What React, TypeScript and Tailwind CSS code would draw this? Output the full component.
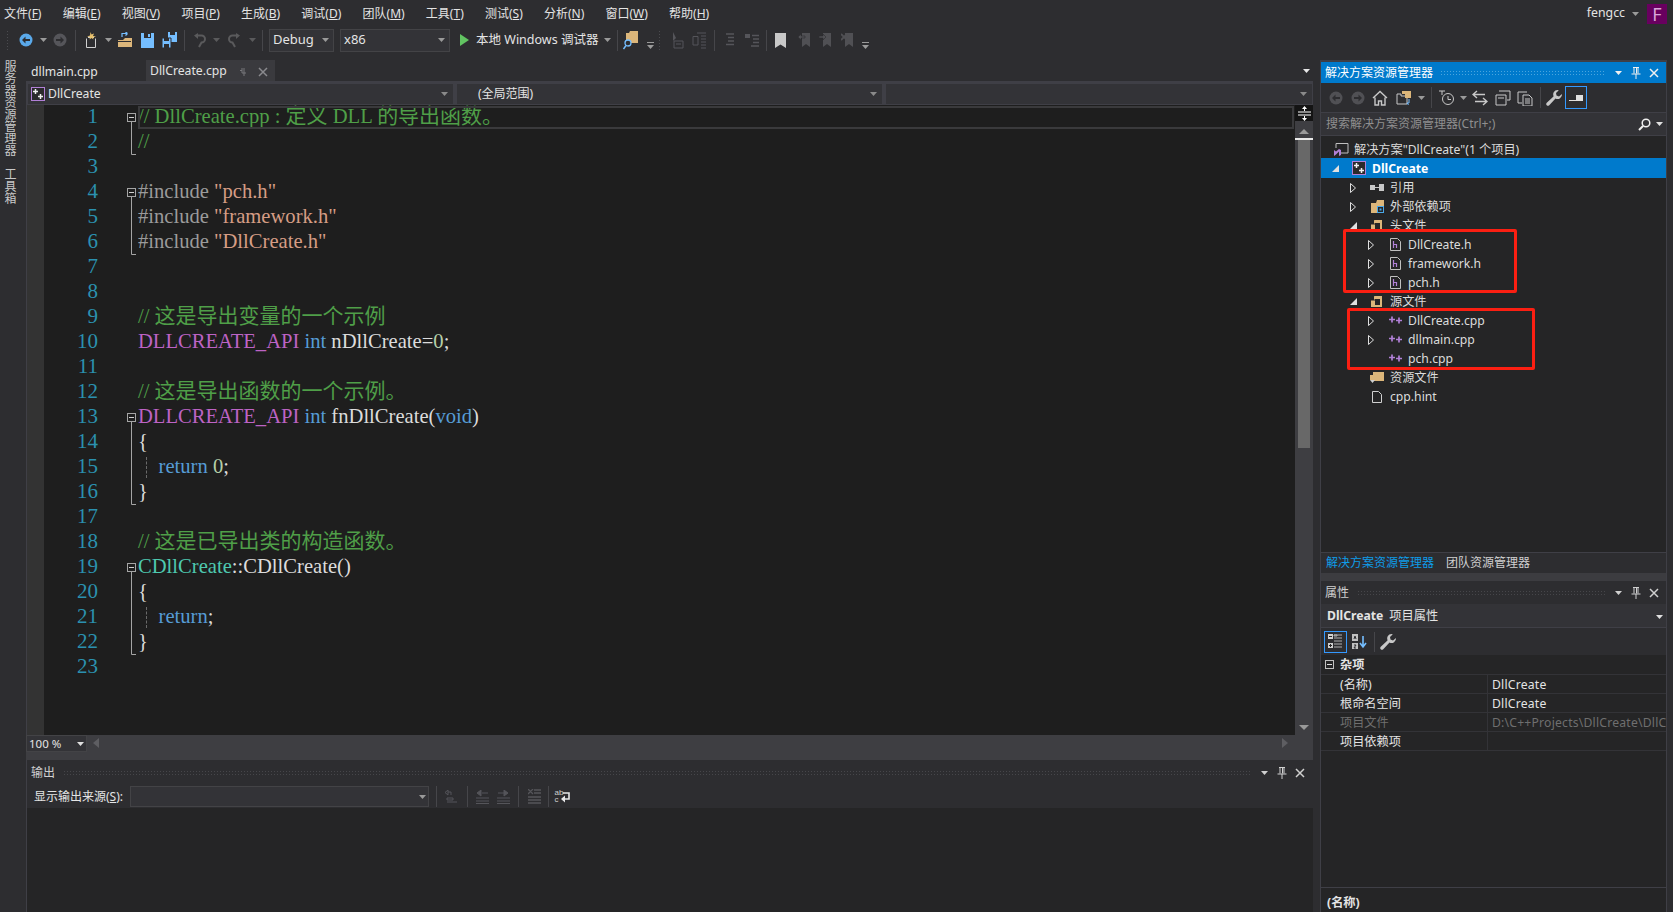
import { ReactNode } from "react";

const uiFont = "font-['Noto_Sans','Noto_Sans_CJK_SC',sans-serif]";
const codeFont = "font-['Liberation_Serif','Noto_Sans_CJK_SC',serif]";

const menus = [
  ["文件", "F"], ["编辑", "E"], ["视图", "V"], ["项目", "P"], ["生成", "B"], ["调试", "D"],
  ["团队", "M"], ["工具", "T"], ["测试", "S"], ["分析", "N"], ["窗口", "W"], ["帮助", "H"],
];

const C = "text-[#4f9f48]";
const CJ = "text-[#4f9f48] text-[21px]";
const K = "text-[#569cd6]";
const P = "text-[#9b9b9b]";
const S = "text-[#d69d85]";
const M = "text-[#bd63c5]";
const T = "text-[#4ec9b0]";
const N = "text-[#dcdcdc]";
const D = "text-[#b5cea8]";

type Fold = "start" | "mid" | "end" | undefined;
type Line = { tokens: [string, string][]; fold?: Fold; guide?: boolean };

const code: Line[] = [
  { tokens: [["// DllCreate.cpp : ", C], ["定义", CJ], [" DLL ", C], ["的导出函数。", CJ]], fold: "start" },
  { tokens: [["//", C]], fold: "end" },
  { tokens: [] },
  { tokens: [["#include ", P], ['"pch.h"', S]], fold: "start" },
  { tokens: [["#include ", P], ['"framework.h"', S]], fold: "mid" },
  { tokens: [["#include ", P], ['"DllCreate.h"', S]], fold: "end" },
  { tokens: [] },
  { tokens: [] },
  { tokens: [["// ", C], ["这是导出变量的一个示例", CJ]] },
  { tokens: [["DLLCREATE_API", M], [" ", N], ["int", K], [" nDllCreate=", N], ["0", D], [";", N]] },
  { tokens: [] },
  { tokens: [["// ", C], ["这是导出函数的一个示例。", CJ]] },
  { tokens: [["DLLCREATE_API", M], [" ", N], ["int", K], [" fnDllCreate(", N], ["void", K], [")", N]], fold: "start" },
  { tokens: [["{", N]], fold: "mid" },
  { tokens: [["    ", N], ["return", K], [" ", N], ["0", D], [";", N]], fold: "mid", guide: true },
  { tokens: [["}", N]], fold: "end" },
  { tokens: [] },
  { tokens: [["// ", C], ["这是已导出类的构造函数。", CJ]] },
  { tokens: [["CDllCreate", T], ["::CDllCreate()", N]], fold: "start" },
  { tokens: [["{", N]], fold: "mid" },
  { tokens: [["    ", N], ["return", K], [";", N]], fold: "mid", guide: true },
  { tokens: [["}", N]], fold: "end" },
  { tokens: [] },
];

function Caret({ color = "#9a9a9a" }: { color?: string }) {
  return (
    <svg width="7" height="4" viewBox="0 0 7 4">
      <path d="M0 0h7L3.5 4z" fill={color} />
    </svg>
  );
}

function OverflowCaret() {
  return (
    <svg width="7" height="8" viewBox="0 0 7 8" className="mt-[11px]">
      <path d="M0 0h7v1H0zM0 3h7L3.5 7z" fill="#9a9a9a" />
    </svg>
  );
}

function Cell({ className, children }: { className: string; children?: ReactNode }) {
  return <div className={`flex flex-none items-center justify-center ${className}`}>{children}</div>;
}

function Sep({ className }: { className: string }) {
  return (
    <Cell className={className}>
      <div className="h-[21px] w-px bg-[#46464a]" />
    </Cell>
  );
}

function Grip() {
  return <div className="h-[20px] w-[4px] bg-[radial-gradient(#4b4b4f_1px,transparent_1px)] bg-[length:3px_3px]" />;
}

function CircleArrow({ dir, color, arrow }: { dir: "l" | "r"; color: string; arrow: string }) {
  return (
    <svg width="14" height="14" viewBox="0 0 14 14">
      <circle cx="7" cy="7" r="6.5" fill={color} />
      <path
        d={dir === "l" ? "M3 7l3.5-3.5V6H11v2H6.5v2.500z" : "M11 7L7.500 3.500V6H3v2h4.500v2.500z"}
        fill={arrow}
      />
    </svg>
  );
}

function NewProjectIcon() {
  return (
    <svg width="15" height="17" viewBox="0 0 15 17">
      <path d="M2.500 6.500v9h9v-9" fill="none" stroke="#d0d0d0" />
      <path d="M4 4.500h6v1.500H4z" fill="#d0d0d0" />
      <path d="M6.500 0l1 2.500L10 1.500 9 4l3 .5-3 1 .5 2-2-1.500L5.500 7.500 6 5 3 4.500 6 3.500z" fill="#e8c26e" />
    </svg>
  );
}

function FolderOpenIcon() {
  return (
    <svg width="16" height="16" viewBox="0 0 16 16">
      <path d="M1 8h5l2-2h7v9H1z" fill="#dcb67a" />
      <path d="M1 9h13v1H1z" fill="#2d2d30" />
      <path d="M5 5V1.500h5.500M10.500 1.500L8.500 0M10.500 1.500L8.500 3.500" fill="none" stroke="#75beff" strokeWidth="1.200" />
    </svg>
  );
}

function SaveIcon() {
  return (
    <svg width="13" height="15" viewBox="0 0 13 15">
      <path d="M0 0h13v15H0z" fill="#75beff" />
      <path d="M3 0h7v5H3z" fill="#2d2d30" />
      <path d="M7 1h2v3H7zM3 9h7v6H3z" fill="#75beff" />
    </svg>
  );
}

function SaveAllIcon() {
  return (
    <svg width="15" height="16" viewBox="0 0 15 16">
      <path d="M6 0h9v10H6z" fill="#75beff" />
      <path d="M8 0h5v3H8z" fill="#2d2d30" />
      <path d="M0 6h9v10H0z" fill="#75beff" stroke="#2d2d30" />
      <path d="M2 6h5v3H2zM2 12h5v4H2z" fill="#2d2d30" />
    </svg>
  );
}

function UndoIcon({ flip }: { flip?: boolean }) {
  return (
    <svg width="13" height="15" viewBox="0 0 13 15" className={flip ? "-scale-x-100" : ""}>
      <path d="M5 2.500h3.500a3.500 3.500 0 0 1 0 7L6 14" fill="none" stroke="#5a5a5c" strokeWidth="2" />
      <path d="M5 0v6L1 2.500z" fill="#5a5a5c" />
    </svg>
  );
}

function FindFolderIcon() {
  return (
    <svg width="16" height="19" viewBox="0 0 16 19">
      <path d="M3 2h3l1-2h8v12H3z" fill="#dcb67a" />
      <circle cx="5" cy="12" r="3" fill="#2d2d30" stroke="#75beff" strokeWidth="1.300" />
      <path d="M3 14.500L.5 18" stroke="#75beff" strokeWidth="1.500" />
    </svg>
  );
}

function DimLines({ kind }: { kind: number }) {
  const c = "#55555a";
  const shapes: ReactNode[] = [
    <>
      <path d="M2 0v9l3-3z" fill={c} />
      <path d="M3 9h9v7H3z" fill="none" stroke={c} />
      <path d="M5 12h5" stroke={c} />
    </>,
    <>
      <path d="M5 1h9M9 4h5M9 7h5M9 10h5M9 13h5M9 16h5" stroke={c} />
      <path d="M1 4.500h5V13H1z" fill="none" stroke={c} />
    </>,
    <path d="M4 2h8M6 5.500h6M6 9h6M4 12.500h8" stroke={c} strokeWidth="1.500" />,
    <>
      <path d="M0 2h5v4H0z" fill={c} />
      <path d="M7 3.500h7M8 7h6M8 10.500h6M6 14h8" stroke={c} strokeWidth="1.500" />
    </>,
  ];
  return (
    <svg width="15" height="17" viewBox="0 0 15 17">
      {shapes[kind]}
    </svg>
  );
}

function Bookmark({ mark, color = "#505054" }: { mark?: "l" | "r" | "x"; color?: string }) {
  return (
    <svg width="13" height="15" viewBox="0 0 13 15">
      <path d={mark ? "M4 0h8v14l-4-3-4 3z" : "M1 0h11v15l-5.500-3.500L1 15z"} fill={color} />
      {mark === "l" && <path d="M0 4l3-3v2h4v2H3v2z" fill={color} stroke="#2d2d30" strokeWidth=".6" />}
      {mark === "r" && <path d="M7 4L4 1v2H0v2h4v2z" fill={color} stroke="#2d2d30" strokeWidth=".6" />}
      {mark === "x" && <path d="M0 1l6 6M6 1L0 7" stroke={color} strokeWidth="1.800" />}
    </svg>
  );
}

function MainToolbar() {
  return (
    <div className="flex h-[26px] flex-none items-center text-[13px] text-[#e4e4e4]">
      <Cell className="w-[16px]"><Grip /></Cell>
      <Cell className="w-[20px]"><CircleArrow dir="l" color="#5aa9ea" arrow="#2d2d30" /></Cell>
      <Cell className="w-[14px]"><Caret /></Cell>
      <Cell className="w-[20px]"><CircleArrow dir="r" color="#55555a" arrow="#2d2d30" /></Cell>
      <Sep className="w-[10px]" />
      <Cell className="w-[22px]"><NewProjectIcon /></Cell>
      <Cell className="w-[12px]"><Caret /></Cell>
      <Cell className="w-[22px]"><FolderOpenIcon /></Cell>
      <Cell className="w-[22px]"><SaveIcon /></Cell>
      <Cell className="w-[22px]"><SaveAllIcon /></Cell>
      <Sep className="w-[8px]" />
      <Cell className="w-[22px]"><UndoIcon /></Cell>
      <Cell className="w-[12px]"><Caret color="#5a5a5c" /></Cell>
      <Cell className="w-[24px]"><UndoIcon flip /></Cell>
      <Cell className="w-[12px]"><Caret color="#5a5a5c" /></Cell>
      <Sep className="w-[8px]" />
      <div className="ml-[3px] flex h-[23px] w-[65px] flex-none items-center justify-between border border-[#434346] bg-[#333337] pl-[3px] pr-[4px]">
        Debug <Caret />
      </div>
      <div className="ml-[6px] flex h-[23px] w-[110px] flex-none items-center justify-between border border-[#434346] bg-[#333337] pl-[3px] pr-[4px]">
        x86 <Caret />
      </div>
      <Cell className="ml-[2px] w-[24px]">
        <svg width="9" height="12" viewBox="0 0 9 12"><path d="M0 0l9 6-9 6z" fill="#62c462" /></svg>
      </Cell>
      <div className="w-[122px] flex-none whitespace-nowrap text-[12.500px]">本地 Windows 调试器</div>
      <Cell className="w-[18px]"><Caret /></Cell>
      <Sep className="w-[2px]" />
      <Cell className="ml-[2px] w-[22px]"><FindFolderIcon /></Cell>
      <Cell className="w-[16px]"><OverflowCaret /></Cell>
      <Cell className="w-[4px]"><Grip /></Cell>
      <Cell className="ml-[5px] w-[22px]"><DimLines kind={0} /></Cell>
      <Cell className="w-[20px]"><DimLines kind={1} /></Cell>
      <Sep className="w-[10px]" />
      <Cell className="w-[20px]"><DimLines kind={2} /></Cell>
      <Cell className="ml-[2px] w-[22px]"><DimLines kind={3} /></Cell>
      <Sep className="w-[6px]" />
      <Cell className="w-[22px]"><Bookmark color="#c8c8c8" /></Cell>
      <Cell className="ml-[2px] w-[22px]"><Bookmark mark="l" /></Cell>
      <Cell className="w-[20px]"><Bookmark mark="r" /></Cell>
      <Cell className="ml-px w-[22px]"><Bookmark mark="x" /></Cell>
      <Cell className="w-[14px]"><OverflowCaret /></Cell>
    </div>
  );
}

function FoldMark({ fold }: { fold: Fold }) {
  if (!fold) return null;
  return (
    <svg width="9" height="25" viewBox="0 0 9 25" className="ml-[29px]">
      {fold === "start" && (
        <>
          <rect x=".5" y="8.500" width="8" height="8" fill="none" stroke="#a5a5a5" />
          <path d="M2 12.500h5" stroke="#d0d0d0" />
          <path d="M4.500 17v8" stroke="#a5a5a5" />
        </>
      )}
      {fold === "mid" && <path d="M4.500 0v25" stroke="#a5a5a5" />}
      {fold === "end" && <path d="M4.500 0v24.500H9" fill="none" stroke="#a5a5a5" />}
    </svg>
  );
}

function Editor() {
  return (
    <div className={`flex min-w-0 flex-1 flex-col overflow-hidden bg-[#1e1e1e] ${codeFont}`}>
      {code.map((line, i) => (
        <div key={i} className="flex h-[25px] flex-none text-[20.6px] leading-[23px]">
          <div className="h-full w-[18px] flex-none border-l border-[#3f3f46] bg-[#333333]" />
          <div className="w-[54px] flex-none text-right text-[21px] text-[#2b91af]">{i + 1}</div>
          <div className="w-[39px] flex-none">
            <FoldMark fold={line.fold} />
          </div>
          <div
            className={`relative min-w-0 flex-1 whitespace-pre pl-px ${
              i === 0 ? "outline-2 -outline-offset-3 outline-[#3a3a3c]" : ""
            }`}
          >
            {line.guide && <div className="absolute inset-y-[2px] left-[9px] border-l border-dashed border-[#6a6a6a]" />}
            {line.tokens.map(([text, color], j) => (
              <span key={j} className={color}>
                {text}
              </span>
            ))}
          </div>
        </div>
      ))}
      <div className="w-[18px] flex-1 border-l border-[#3f3f46] bg-[#333333]" />
    </div>
  );
}

function VScroll() {
  return (
    <div className="flex w-[18px] flex-none flex-col bg-[#3e3e42]">
      <div className="flex h-[16px] flex-none items-center justify-center bg-[#141414]">
        <svg width="13" height="15" viewBox="0 0 13 15">
          <path d="M0 6h13M0 9h13" stroke="#fff" />
          <path d="M6.500 0L9 3H7v2H6V3H4zM6.500 15L9 12H7v-2H6v2H4z" fill="#fff" />
        </svg>
      </div>
      <div className="flex h-[17px] flex-none items-end justify-center pb-[4px]">
        <svg width="10" height="5" viewBox="0 0 10 5"><path d="M5 0l5 5H0z" fill="#999" /></svg>
      </div>
      <div className="h-[2px] flex-none bg-[#e8e8e8]" />
      <div className="mx-[3px] h-[308px] flex-none bg-[#686868]" />
      <div className="flex flex-1 items-end justify-center pb-[5px]">
        <svg width="10" height="5" viewBox="0 0 10 5"><path d="M0 0h10L5 5z" fill="#999" /></svg>
      </div>
    </div>
  );
}

function DropBox({ className, children }: { className: string; children?: ReactNode }) {
  return (
    <div className={`flex h-[20px] flex-none items-center justify-between bg-[#333337] pr-[5px] text-[12.500px] text-[#e4e4e4] ${className}`}>
      <div className="flex items-center">{children}</div>
      <Caret color="#8a8a8a" />
    </div>
  );
}

function ProjectIcon() {
  return (
    <svg width="14" height="14" viewBox="0 0 14 14">
      <rect x=".5" y=".5" width="13" height="13" fill="#2a2a2c" stroke="#b180d7" />
      <path d="M2 4.500h5M4.500 2v5M7 9.500h5M9.500 7v5" stroke="#f0f0f0" strokeWidth="1.500" />
    </svg>
  );
}

function CenterColumn() {
  return (
    <div className="flex min-w-0 flex-1 flex-col">
      <div className="flex h-[21px] flex-none items-center text-[12.200px] text-[#e4e4e4]">
        <div className="w-[120px] flex-none pl-[5px] pt-[3px]">dllmain.cpp</div>
        <div className="flex h-full w-[129px] flex-none items-center bg-[#3a3a3e] pl-[4px] pt-[2px]">
          <span>DllCreate.cpp</span>
          <svg width="10" height="10" viewBox="0 0 10 10" className="ml-auto mr-[9px]">
            <path d="M3 1v5h4M5 6V1M1 3.500h2M5 9V6" fill="none" stroke="#77777b" />
          </svg>
          <svg width="10" height="10" viewBox="0 0 10 10" className="mr-[7px]">
            <path d="M1 1l8 8M9 1L1 9" stroke="#8a8a8e" strokeWidth="1.500" />
          </svg>
        </div>
        <div className="ml-auto mr-[3px]">
          <Caret color="#e8e8e8" />
        </div>
      </div>
      <div className="flex h-[24px] flex-none gap-[4px] bg-[#3f3f46] pl-[2px] pt-[3px]">
        <DropBox className="w-[425px] pl-[3px]">
          <ProjectIcon />
          <span className="ml-[3px] text-[12.200px]">DllCreate</span>
        </DropBox>
        <DropBox className="w-[425px] pl-[21px] text-[12px]">(全局范围)</DropBox>
        <DropBox className="w-[426px]" />
      </div>
      <div className="flex min-h-0 flex-1">
        <Editor />
        <VScroll />
      </div>
      <div className="flex h-[25px] flex-none items-start bg-[#3e3e42]">
        <div className="flex h-[17px] w-[61px] flex-none items-center justify-between border border-[#434346] bg-[#333337] pl-[2px] pr-[2px] text-[11.500px] text-[#e4e4e4]">
          100 % <Caret color="#e0e0e0" />
        </div>
        <svg width="6" height="10" viewBox="0 0 6 10" className="ml-[6px] mt-[3px]"><path d="M6 0v10L0 5z" fill="#5e5e62" /></svg>
        <svg width="6" height="10" viewBox="0 0 6 10" className="ml-auto mr-[25px] mt-[3px]"><path d="M0 0v10l6-5z" fill="#5e5e62" /></svg>
      </div>
      <OutputPanel />
    </div>
  );
}

function PanelButtons({ dark }: { dark?: boolean }) {
  const stroke = dark ? "#f0f0f0" : "#d0d0d0";
  return (
    <>
      <Cell className="w-[18px]"><Caret color={stroke} /></Cell>
      <Cell className="w-[18px]">
        <svg width="10" height="12" viewBox="0 0 10 12">
          <path d="M2 .5h6M3 .5v6M7 .5v6M.5 7h9M5 7v5M5.500 .5v6" fill="none" stroke={stroke} />
        </svg>
      </Cell>
      <Cell className="w-[17px]">
        <svg width="10" height="10" viewBox="0 0 10 10">
          <path d="M1 1l8 8M9 1L1 9" stroke={stroke} strokeWidth="1.500" />
        </svg>
      </Cell>
    </>
  );
}

function OutputPanel() {
  const dim = "#55555a";
  return (
    <div className="flex h-[152px] flex-none flex-col border-l border-[#3f3f46]">
      <div className="flex h-[25px] flex-none items-center pl-[4px] text-[12px] text-[#d0d0d0]">
        输出
        <div className="ml-[8px] h-[5px] flex-1 bg-[radial-gradient(#46464a_1px,transparent_1px)] bg-[length:3px_3px]" />
        <div className="ml-[5px] flex">
          <PanelButtons />
        </div>
        <div className="w-[5px]" />
      </div>
      <div className="flex h-[23px] flex-none items-center pl-[7px] text-[12px] text-[#e4e4e4]">
        <div className="w-[96px] flex-none whitespace-nowrap">
          显示输出来源(<span className="underline">S</span>):
        </div>
        <div className="flex h-[21px] w-[299px] flex-none items-center justify-end border border-[#434346] bg-[#333337] pr-[2px]">
          <Caret />
        </div>
        <Sep className="ml-[7px] w-px" />
        <Cell className="ml-[5px] w-[20px]">
          <svg width="14" height="14" viewBox="0 0 14 14">
            <path d="M3 0v5l-3-2.500zM3 2h3v3M2 8h6v2H2zM2 12h10" fill="none" stroke={dim} />
          </svg>
        </Cell>
        <Sep className="ml-[5px] w-px" />
        <Cell className="ml-[4px] w-[20px]">
          <svg width="13" height="14" viewBox="0 0 13 14">
            <path d="M5 0L1 3l4 3zM6 3h6M0 8h13M0 11h13M0 13.500h13" stroke={dim} fill={dim} />
          </svg>
        </Cell>
        <Cell className="ml-px w-[20px]">
          <svg width="13" height="14" viewBox="0 0 13 14">
            <path d="M7 0l4 3-4 3zM1 3h6M0 8h13M0 11h13M0 13.500h13" stroke={dim} fill={dim} />
          </svg>
        </Cell>
        <Sep className="ml-[5px] w-px" />
        <Cell className="ml-[5px] w-[20px]">
          <svg width="13" height="15" viewBox="0 0 13 15">
            <path d="M0 0l5 5M5 0L0 5M6 1h7M6 4h7M0 8h13M0 11h13M0 14h13" stroke={dim} strokeWidth="1.300" />
          </svg>
        </Cell>
        <Sep className="ml-[4px] w-px" />
        <Cell className="ml-[3px] w-[20px]">
          <div className="relative flex h-[15px] w-[15px] flex-col font-['Liberation_Sans',sans-serif] text-[8px] leading-[7px] text-[#d0d0d0]">
            <span>ab</span>
            <span>c</span>
            <svg width="9" height="11" viewBox="0 0 9 11" className="absolute right-0 top-[3px]">
              <path d="M2 1h6v6H3" fill="none" stroke="#e8e8e8" strokeWidth="1.600" />
              <path d="M4 3.500L0 7l4 3.500z" fill="#e8e8e8" />
            </svg>
          </div>
        </Cell>
      </div>
      <div className="flex-1 bg-[#252526]" />
    </div>
  );
}

function ToolGlyph({ children, w = 16, h = 16 }: { children: ReactNode; w?: number; h?: number }) {
  return (
    <svg width={w} height={h} viewBox={`0 0 ${w} ${h}`}>
      {children}
    </svg>
  );
}

function Wrench() {
  return (
    <ToolGlyph w={18} h={18}>
      <path
        d="M12.500 1a4.500 4.500 0 0 0-4 6.500L1.500 14a1.800 1.800 0 0 0 2.500 2.500l6.500-7A4.500 4.500 0 0 0 17 5l-3 2.500-2.500-1L11 4l2.800-2.800A4.500 4.500 0 0 0 12.500 1z"
        fill="#c8c8c8"
      />
    </ToolGlyph>
  );
}

function ExplorerToolbar() {
  const g = "#c8c8c8";
  return (
    <div className="flex h-[29px] flex-none items-center">
      <Cell className="ml-[5px] w-[20px]"><CircleArrow dir="l" color="#505054" arrow="#2d2d30" /></Cell>
      <Cell className="ml-[2px] w-[20px]"><CircleArrow dir="r" color="#505054" arrow="#2d2d30" /></Cell>
      <Cell className="ml-px w-[22px]">
        <ToolGlyph>
          <path d="M1 8l7-6.500L15 8M3 7.500V15h3.500v-4h3v4H13V7.500" fill="none" stroke={g} strokeWidth="1.400" />
        </ToolGlyph>
      </Cell>
      <Cell className="ml-[2px] w-[22px]">
        <ToolGlyph>
          <path d="M1 4h4v2h6v8H1z" fill="none" stroke={g} />
          <path d="M6 1h9v7H9V4H6z" fill="#dcb67a" />
          <path d="M13 9v4h-2l1.500 2" fill="none" stroke="#75beff" />
        </ToolGlyph>
      </Cell>
      <Cell className="w-[12px]"><Caret /></Cell>
      <Cell className="ml-[4px] w-[1px]"><div className="h-[21px] w-px bg-[#46464a]" /></Cell>
      <Cell className="ml-[5px] w-[20px]">
        <ToolGlyph>
          <circle cx="9" cy="9" r="5.500" fill="none" stroke={g} />
          <path d="M9 6v3.500h3M0 1h6M3 1v4" fill="none" stroke={g} />
        </ToolGlyph>
      </Cell>
      <Cell className="w-[12px]"><Caret /></Cell>
      <Cell className="ml-[1px] w-[20px]">
        <ToolGlyph>
          <path d="M5 1L1 4.500 5 8M1 4.500h12M11 8l4 3.500-4 3.500M15 11.500H3" fill="none" stroke={g} strokeWidth="1.400" />
        </ToolGlyph>
      </Cell>
      <Cell className="ml-[2px] w-[22px]">
        <ToolGlyph>
          <path d="M4 1h11v9h-3M1 5h10v10H1zM3 8h6" fill="none" stroke={g} />
        </ToolGlyph>
      </Cell>
      <Cell className="w-[22px]">
        <ToolGlyph>
          <path d="M1 2h9M1 2v11h4M6 5h6l3 3v8H6zM8 9h5M8 11h5M8 13h5" fill="none" stroke={g} />
        </ToolGlyph>
      </Cell>
      <Cell className="ml-[4px] w-[1px]"><div className="h-[21px] w-px bg-[#46464a]" /></Cell>
      <Cell className="ml-[3px] w-[20px]"><Wrench /></Cell>
      <Cell className="ml-px h-[23px] w-[22px] border border-[#3399ff]">
        <svg width="14" height="6" viewBox="0 0 14 6"><path d="M0 5h14v1H0zM7 0h7v5H7z" fill="#e0e0e0" /></svg>
      </Cell>
    </div>
  );
}

type TreeRow = { label: string; depth: 0 | 1 | 2; icon: ReactNode; expander?: "open" | "closed"; active?: boolean };

function Expander({ kind }: { kind?: "open" | "closed" }) {
  if (kind === "closed")
    return (
      <svg width="6" height="10" viewBox="0 0 6 10">
        <path d="M.5 .5v9l5-4.500z" fill="none" stroke="#e0e0e0" />
      </svg>
    );
  if (kind === "open")
    return (
      <svg width="7" height="7" viewBox="0 0 7 7">
        <path d="M7 0v7H0z" fill="#e0e0e0" />
      </svg>
    );
  return null;
}

const FileHIcon = (
  <svg width="11" height="13" viewBox="0 0 11 13">
    <path d="M.5 .5h7l3 3v9H.5z" fill="#252526" stroke="#c0c0c0" />
    <path d="M3.500 3v7M3.500 6.500h3v3.500" fill="none" stroke="#b180d7" strokeWidth="1.200" />
  </svg>
);
const CppIcon = (
  <svg width="13" height="9" viewBox="0 0 13 9">
    <path d="M0 3.500h6M3 .5v6M7 4.500h6M10 1.500v6" stroke="#b180d7" strokeWidth="1.700" />
  </svg>
);
const FilterIcon = (
  <svg width="14" height="13" viewBox="0 0 14 13">
    <path d="M4 1h8v11H1V5h3z" fill="#dcb67a" />
    <path d="M1 5h6M4 1l-3 4" stroke="#252526" />
    <path d="M5 4h5v6H5z" fill="#252526" />
  </svg>
);
const ResourceIcon = (
  <svg width="14" height="13" viewBox="0 0 14 13">
    <path d="M3 1h11v9H3zM0 4h4v5H0z" fill="#dcb67a" />
    <path d="M0 9h5L2.500 12z" fill="#d0d0d0" />
  </svg>
);
const HintIcon = (
  <svg width="10" height="12" viewBox="0 0 10 12">
    <path d="M.5 .5h6l3 3v8H.5z" fill="none" stroke="#d0d0d0" />
  </svg>
);
const RefIcon = (
  <svg width="14" height="7" viewBox="0 0 14 7">
    <path d="M0 1h5v5H0zM9 0h5v7H9z" fill="#c8c8c8" />
    <path d="M5 3.500h4" stroke="#c8c8c8" />
  </svg>
);
const ExternalIcon = (
  <svg width="14" height="13" viewBox="0 0 14 13">
    <path d="M1 3h5l1-3h7v8H7v5H1z" fill="#dcb67a" />
    <rect x="7.500" y="6.500" width="6" height="6" fill="#252526" stroke="#4aa8e8" />
    <path d="M9.500 8.500h2v2h-2z" fill="#4aa8e8" />
  </svg>
);

const indent = ["pl-[6px]", "pl-[24px]", "pl-[42px]"];

function Row({ label, depth, icon, expander, active }: TreeRow) {
  return (
    <div
      className={`relative flex items-center whitespace-nowrap text-[12.200px] ${indent[depth]} ${
        active ? "-mt-px h-[20px] bg-[#007acc] font-bold text-white" : "h-[19px] text-[#dcdcdc]"
      }`}
    >
      <Cell className="w-[16px]"><Expander kind={expander} /></Cell>
      <Cell className="ml-[8px] w-[16px]">{icon}</Cell>
      <span className="ml-[5px] mt-[2px]">{label}</span>
    </div>
  );
}

function SolutionTree() {
  return (
    <div className="h-[418px] flex-none border-y border-[#3f3f46] bg-[#252526] pt-[4px]">
      <div className="flex h-[19px] items-center pl-[12px] text-[12.200px] text-[#dcdcdc]">
        <svg width="16" height="15" viewBox="0 0 16 15">
          <path d="M3 6V1.500h12V11H8" fill="none" stroke="#c0c0c0" />
          <path d="M1 8v6l2-1.500 3-3V14l2-1V8L6 7 3 9.500 1 8z" fill="#b180d7" />
        </svg>
        <span className="ml-[5px] mt-[2px]">解决方案"DllCreate"(1 个项目)</span>
      </div>
      <Row
        label="DllCreate"
        depth={0}
        active
        expander="open"
        icon={<ProjectIcon />}
      />
      <Row label="引用" depth={1} expander="closed" icon={RefIcon} />
      <Row label="外部依赖项" depth={1} expander="closed" icon={ExternalIcon} />
      <Row label="头文件" depth={1} expander="open" icon={FilterIcon} />
      <div className="relative">
        <div className="absolute -bottom-px -top-[6px] left-[22px] w-[174px] rounded-[2px] border-[3px] border-[#fb1f12] bg-[#252526]" />
        <Row label="DllCreate.h" depth={2} expander="closed" icon={FileHIcon} />
        <Row label="framework.h" depth={2} expander="closed" icon={FileHIcon} />
        <Row label="pch.h" depth={2} expander="closed" icon={FileHIcon} />
      </div>
      <Row label="源文件" depth={1} expander="open" icon={FilterIcon} />
      <div className="relative">
        <div className="absolute -bottom-[2px] -top-[3px] left-[26px] w-[188px] rounded-[2px] border-[3px] border-[#fb1f12] bg-[#252526]" />
        <Row label="DllCreate.cpp" depth={2} expander="closed" icon={CppIcon} />
        <Row label="dllmain.cpp" depth={2} expander="closed" icon={CppIcon} />
        <Row label="pch.cpp" depth={2} icon={CppIcon} />
      </div>
      <Row label="资源文件" depth={1} icon={ResourceIcon} />
      <Row label="cpp.hint" depth={1} icon={HintIcon} />
    </div>
  );
}

function PropRow({ name, value, dim }: { name: string; value?: string; dim?: boolean }) {
  return (
    <div className={`flex h-[19px] flex-none items-center border-b border-[#333337] text-[12.200px] ${dim ? "text-[#6f6f6f]" : "text-[#e4e4e4]"}`}>
      <div className="h-full w-[15px] flex-none" />
      <div className="flex h-full w-[152px] flex-none items-center border-r border-[#333337] pl-[4px] pt-[2px]">{name}</div>
      <div className="min-w-0 flex-1 overflow-hidden whitespace-nowrap pl-[4px] pt-[2px] tracking-[0.2px]">{value}</div>
    </div>
  );
}

function RightColumn() {
  return (
    <div className="mr-[6px] flex w-[347px] flex-none flex-col border-x border-[#3f3f46]">
      <div className="flex h-[23px] flex-none items-center border-t-2 border-[#3f3f46] bg-[#007acc] pl-[4px] text-[12px] text-white">
        解决方案资源管理器
        <div className="ml-[7px] h-[5px] flex-1 bg-[radial-gradient(#4aa5de_1px,transparent_1px)] bg-[length:3px_3px]" />
        <div className="ml-[4px] flex"><PanelButtons dark /></div>
        <div className="w-[4px]" />
      </div>
      <ExplorerToolbar />
      <div className="flex h-[23px] flex-none items-center border-t border-[#3f3f46] bg-[#333337] pl-[5px] text-[12px] text-[#8f8f8f]">
        搜索解决方案资源管理器(Ctrl+;)
        <svg width="13" height="13" viewBox="0 0 13 13" className="ml-auto">
          <circle cx="8" cy="5" r="3.800" fill="none" stroke="#f0f0f0" strokeWidth="1.500" />
          <path d="M5 8l-4 4" stroke="#f0f0f0" strokeWidth="2" />
        </svg>
        <div className="ml-[5px] mr-[3px]"><Caret color="#e0e0e0" /></div>
      </div>
      <SolutionTree />
      <div className="flex h-[20px] flex-none items-center text-[12px]">
        <div className="w-[118px] flex-none pl-[5px] text-[#0e9ce8]">解决方案资源管理器</div>
        <div className="flex h-full flex-1 items-center bg-[#2d2d30] pl-[7px] text-[#d0d0d0]">团队资源管理器</div>
      </div>
      <div className="h-[8px] flex-none bg-[#3c3c40]" />
      <div className="flex h-[23px] flex-none items-center pl-[4px] text-[12px] text-[#d0d0d0]">
        属性
        <div className="ml-[8px] h-[5px] flex-1 bg-[radial-gradient(#46464a_1px,transparent_1px)] bg-[length:3px_3px]" />
        <div className="ml-[4px] flex"><PanelButtons /></div>
        <div className="w-[4px]" />
      </div>
      <div className="flex h-[24px] flex-none items-center border-b border-[#3f3f46] bg-[#333337] pl-[6px] pt-[2px] text-[12.200px] text-[#e4e4e4]">
        <b>DllCreate</b>
        <span className="ml-[6px]">项目属性</span>
        <div className="ml-auto mr-[3px]"><Caret color="#e0e0e0" /></div>
      </div>
      <div className="flex h-[27px] flex-none items-center">
        <Cell className="ml-[3px] h-[22px] w-[23px] border border-[#3399ff]">
          <svg width="15" height="15" viewBox="0 0 15 15">
            <path d="M0 0h5v5H0zM0 9h5v5H0z" fill="#d0d0d0" />
            <path d="M6 1h3v1H6zM6 4h8M6 7h8M6 10h8M6 13h8M6 1h8" stroke="#b0b0b0" />
            <path d="M1 2.500h3M1 11.500h3M2.500 10v3" stroke="#252526" />
          </svg>
        </Cell>
        <Cell className="ml-px w-[22px]">
          <div className="relative h-[15px] w-[15px]">
            <svg width="15" height="15" viewBox="0 0 15 15">
              <path d="M0 0h6v7H0zM0 9h6v6H0z" fill="#c0c0c0" />
              <path d="M2 5l1-3 1 3M2 11h2l-2 3h2" fill="none" stroke="#2d2d30" />
              <path d="M11 2v11M8 9l3 4 3-4" fill="none" stroke="#75beff" strokeWidth="1.600" />
            </svg>
          </div>
        </Cell>
        <Cell className="ml-[4px] w-[1px]"><div className="h-[20px] w-px bg-[#46464a]" /></Cell>
        <Cell className="ml-[3px] w-[20px]"><Wrench /></Cell>
      </div>
      <div className="flex h-[20px] flex-none items-center border-b border-[#333337] bg-[#252526] pl-[4px] text-[12.200px] font-bold text-[#e4e4e4]">
        <svg width="9" height="9" viewBox="0 0 9 9">
          <rect x=".5" y=".5" width="8" height="8" fill="none" stroke="#c0c0c0" />
          <path d="M2 4.500h5" stroke="#e0e0e0" />
        </svg>
        <span className="ml-[6px] mt-[2px]">杂项</span>
      </div>
      <div className="flex min-h-0 flex-1 flex-col bg-[#252526]">
        <PropRow name="(名称)" value="DllCreate" />
        <PropRow name="根命名空间" value="DllCreate" />
        <PropRow name="项目文件" value="D:\C++Projects\DllCreate\DllC" dim />
        <PropRow name="项目依赖项" />
      </div>
      <div className="flex h-[25px] flex-none items-center border-t border-[#3f3f46] bg-[#252526] pl-[6px] pt-[6px] text-[12.200px] font-bold text-[#e4e4e4]">
        (名称)
      </div>
    </div>
  );
}

export default function App() {
  return (
    <div className={`flex h-screen w-screen flex-col overflow-hidden bg-[#2d2d30] ${uiFont}`}>
      <div className="flex h-[27px] flex-none items-center text-[12px] text-[#e4e4e4]">
        {menus.map(([label, key]) => (
          <div key={key} className="px-[10.600px] first:pl-[4px]">
            {label}(<span className="underline">{key}</span>)
          </div>
        ))}
        <div className="ml-auto flex items-center pr-[6px] text-[12.300px]">
          fengcc
          <div className="ml-[7px] mr-[8px]"><Caret /></div>
          <div className="flex h-[20px] w-[20px] items-center justify-center bg-[#68005f] text-[18px] leading-none text-[#d9a6d9]">
            F
          </div>
        </div>
      </div>
      <MainToolbar />
      <div className="h-[7px] flex-none" />
      <div className="flex min-h-0 flex-1">
        <div className="flex w-[26px] flex-none gap-[12px] pr-[10px] text-[12px] leading-[13px] text-[#c8c8c8] [writing-mode:vertical-rl]">
          <span>服务器资源管理器</span>
          <span>工具箱</span>
        </div>
        <CenterColumn />
        <div className="w-[7px] flex-none" />
        <RightColumn />
      </div>
    </div>
  );
}
